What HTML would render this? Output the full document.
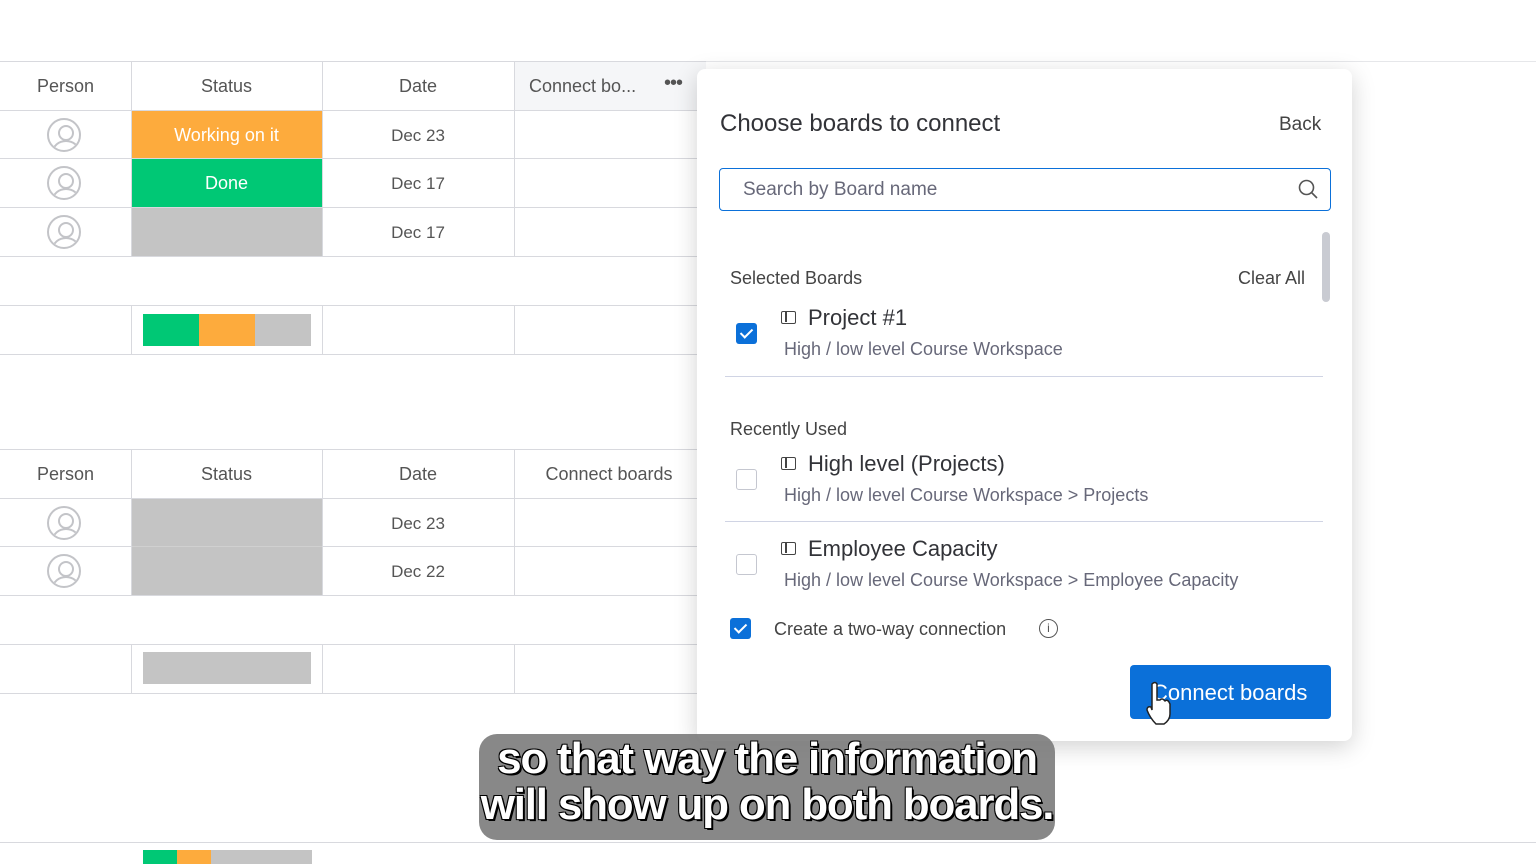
<!DOCTYPE html>
<html><head><meta charset="utf-8"><style>
*{margin:0;padding:0;box-sizing:border-box}
body{width:1536px;height:864px;overflow:hidden;background:#fff;font-family:"Liberation Sans",sans-serif;position:relative;color:#323338}
.a{position:absolute}
.hl{position:absolute;left:0;width:706px;height:1px;background:#d8d9de}
.vl{position:absolute;width:1px;background:#d8d9de}
.t{position:absolute;text-align:center;font-size:18px;color:#555}
.av{position:absolute;width:34px;height:34px;border:2px solid #c3c4c8;border-radius:50%;overflow:hidden}
.av:before{content:"";position:absolute;left:9px;top:5px;width:12px;height:12px;border:2px solid #c3c4c8;border-radius:50%}
.av:after{content:"";position:absolute;left:3px;top:20px;width:24px;height:20px;border:2px solid #c3c4c8;border-radius:50%}
.cb{position:absolute;width:21px;height:21px;border-radius:3px;background:#0b70d9}
.cb:after{content:"";position:absolute;left:7px;top:3px;width:5px;height:10px;border:solid #fff;border-width:0 2px 2px 0;transform:rotate(45deg)}
.ecb{position:absolute;width:21px;height:21px;border:1.5px solid #c5c7d0;border-radius:3px}
.bi{position:absolute;width:15px;height:13px;border:1.5px solid #444;border-radius:2px}
.bi:after{content:"";position:absolute;left:3px;top:0;width:1.5px;height:10px;background:#444}
</style></head><body>
<div class="hl" style="top:61px"></div><div class="hl" style="top:110px"></div><div class="hl" style="top:158px"></div><div class="hl" style="top:207px"></div><div class="hl" style="top:256px"></div><div class="hl" style="top:305px"></div><div class="hl" style="top:354px"></div>
<div class="a" style="left:514px;top:62px;width:192px;height:48px;background:#f5f6f8"></div>
<div class="vl" style="left:131px;top:62px;height:194px"></div><div class="vl" style="left:322px;top:62px;height:194px"></div><div class="vl" style="left:514px;top:62px;height:194px"></div>
<div class="vl" style="left:131px;top:305px;height:49px"></div><div class="vl" style="left:322px;top:305px;height:49px"></div><div class="vl" style="left:514px;top:305px;height:49px"></div>
<div class="t" style="left:0;width:131px;top:76px">Person</div>
<div class="t" style="left:131px;width:191px;top:76px">Status</div>
<div class="t" style="left:322px;width:192px;top:76px">Date</div>
<div class="t" style="left:529px;top:76px;text-align:left">Connect bo...</div>
<div class="t" style="left:664px;top:72px;font-size:20px;color:#555;letter-spacing:-1px">•••</div>
<div class="a" style="left:132px;top:111px;width:190px;height:47px;background:#fdab3d"></div>
<div class="t" style="left:131px;width:191px;top:125px;color:#fff">Working on it</div>
<div class="a" style="left:132px;top:159px;width:190px;height:48px;background:#00c875"></div>
<div class="t" style="left:131px;width:191px;top:173px;color:#fff">Done</div>
<div class="a" style="left:132px;top:208px;width:190px;height:48px;background:#c4c4c4"></div>
<div class="t" style="left:322px;width:192px;top:126px;font-size:17px">Dec 23</div>
<div class="t" style="left:322px;width:192px;top:174px;font-size:17px">Dec 17</div>
<div class="t" style="left:322px;width:192px;top:223px;font-size:17px">Dec 17</div>
<div class="av" style="left:47px;top:118px"></div><div class="av" style="left:47px;top:166px"></div><div class="av" style="left:47px;top:215px"></div>
<div class="a" style="left:143px;top:314px;width:56px;height:32px;background:#00c875"></div>
<div class="a" style="left:199px;top:314px;width:56px;height:32px;background:#fdab3d"></div>
<div class="a" style="left:255px;top:314px;width:56px;height:32px;background:#c4c4c4"></div>
<div class="hl" style="top:449px"></div><div class="hl" style="top:498px"></div><div class="hl" style="top:546px"></div><div class="hl" style="top:595px"></div><div class="hl" style="top:644px"></div><div class="hl" style="top:693px"></div>
<div class="vl" style="left:131px;top:450px;height:145px"></div><div class="vl" style="left:322px;top:450px;height:145px"></div><div class="vl" style="left:514px;top:450px;height:145px"></div>
<div class="vl" style="left:131px;top:644px;height:49px"></div><div class="vl" style="left:322px;top:644px;height:49px"></div><div class="vl" style="left:514px;top:644px;height:49px"></div>
<div class="t" style="left:0;width:131px;top:464px">Person</div>
<div class="t" style="left:131px;width:191px;top:464px">Status</div>
<div class="t" style="left:322px;width:192px;top:464px">Date</div>
<div class="t" style="left:514px;width:190px;top:464px">Connect boards</div>
<div class="a" style="left:132px;top:499px;width:190px;height:96px;background:#c4c4c4"></div>
<div class="a" style="left:132px;top:546px;width:190px;height:1px;background:#d0d0d0"></div>
<div class="t" style="left:322px;width:192px;top:514px;font-size:17px">Dec 23</div>
<div class="t" style="left:322px;width:192px;top:562px;font-size:17px">Dec 22</div>
<div class="av" style="left:47px;top:506px"></div><div class="av" style="left:47px;top:554px"></div>
<div class="a" style="left:143px;top:652px;width:168px;height:32px;background:#c4c4c4"></div>
<div class="a" style="left:0;top:842px;width:1536px;height:1px;background:#d8d9de"></div>
<div class="a" style="left:143px;top:850px;width:34px;height:14px;background:#00c875"></div>
<div class="a" style="left:177px;top:850px;width:34px;height:14px;background:#fdab3d"></div>
<div class="a" style="left:211px;top:850px;width:101px;height:14px;background:#c4c4c4"></div>
<div class="a" style="left:706px;top:61px;width:830px;height:1px;background:#e6e7ea"></div>
<div class="a" style="left:697px;top:69px;width:655px;height:672px;background:#fff;border-radius:8px;box-shadow:0 6px 24px rgba(0,0,0,.18)"></div>
<div class="a" style="left:720px;top:110px;font-size:24px;color:#323338">Choose boards to connect</div>
<div class="a" style="left:1279px;top:114px;font-size:19px;color:#444">Back</div>
<div class="a" style="left:719px;top:168px;width:612px;height:43px;border:1.5px solid #0b70d9;border-radius:4px"></div>
<div class="a" style="left:743px;top:179px;font-size:19px;color:#676879">Search by Board name</div>
<svg class="a" style="left:1297px;top:178px" width="22" height="22" viewBox="0 0 22 22"><circle cx="9.5" cy="9.5" r="7" fill="none" stroke="#555" stroke-width="1.6"/><line x1="14.5" y1="14.5" x2="20" y2="20" stroke="#555" stroke-width="1.6"/></svg>
<div class="a" style="left:1322px;top:232px;width:8px;height:70px;background:#c9cbd2;border-radius:4px"></div>
<div class="a" style="left:730px;top:268px;font-size:18px;color:#444">Selected Boards</div>
<div class="a" style="left:1238px;top:268px;font-size:18px;color:#444">Clear All</div>
<div class="cb" style="left:736px;top:323px"></div>
<div class="bi" style="left:781px;top:311px"></div>
<div class="a" style="left:808px;top:305px;font-size:22px;color:#323338">Project #1</div>
<div class="a" style="left:784px;top:339px;font-size:18px;color:#676879">High / low level Course Workspace</div>
<div class="a" style="left:725px;top:376px;width:598px;height:1px;background:#d0d4e4"></div>
<div class="a" style="left:730px;top:419px;font-size:18px;color:#444">Recently Used</div>
<div class="ecb" style="left:736px;top:469px"></div>
<div class="bi" style="left:781px;top:457px"></div>
<div class="a" style="left:808px;top:451px;font-size:22px;color:#323338">High level (Projects)</div>
<div class="a" style="left:784px;top:485px;font-size:18px;color:#676879">High / low level Course Workspace &gt; Projects</div>
<div class="a" style="left:725px;top:521px;width:598px;height:1px;background:#d0d4e4"></div>
<div class="ecb" style="left:736px;top:554px"></div>
<div class="bi" style="left:781px;top:542px"></div>
<div class="a" style="left:808px;top:536px;font-size:22px;color:#323338">Employee Capacity</div>
<div class="a" style="left:784px;top:570px;font-size:18px;color:#676879">High / low level Course Workspace &gt; Employee Capacity</div>
<div class="cb" style="left:730px;top:618px"></div>
<div class="a" style="left:774px;top:619px;font-size:18px;color:#444">Create a two-way connection</div>
<div class="a" style="left:1039px;top:619px;width:19px;height:19px;border:1.5px solid #555;border-radius:50%;font-size:12px;text-align:center;line-height:16px;color:#555">i</div>
<div class="a" style="left:1130px;top:665px;width:201px;height:54px;background:#0b70d9;border-radius:4px"></div>
<div class="a" style="left:1152px;top:680px;font-size:22px;color:#fff">Connect boards</div>
<svg class="a" style="left:1144px;top:680px" width="30" height="48" viewBox="0 0 30 48"><path d="M8 4 Q11 1 13 4 L13 20 L16 20 Q18 18 20 20 L21 21 Q23 19 25 22 L26 24 V34 Q26 40 20 44 L12 44 Q6 38 3 30 Q3 26 7 27 L8 30 Z" fill="#fff" stroke="#222" stroke-width="1.5"/></svg>
<div class="a" style="left:479px;top:734px;width:576px;height:106px;background:rgba(120,120,120,.88);border-radius:18px"></div>
<div class="a" style="left:469px;top:736px;width:596px;text-align:center;font-size:44px;line-height:46px;font-weight:bold;color:#fff;letter-spacing:-1.2px;text-shadow:2px 2px 0 #000,-1px -1px 0 #000,1px -1px 0 #000,-1px 1px 0 #000">so that way the information<br>will show up on both boards.</div>
</body></html>
